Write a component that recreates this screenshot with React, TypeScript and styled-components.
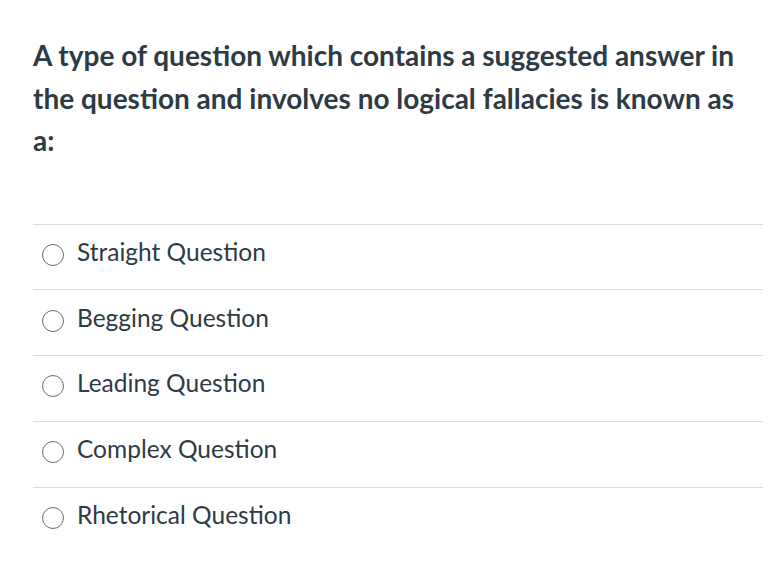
import styled, { createGlobalStyle } from 'styled-components';

const GlobalStyle = createGlobalStyle`
  body {
    margin: 0;
    background: #ffffff;
    font-family: Lato, "Liberation Sans", sans-serif;
    color: #2d3b45;
  }
`;

const Quiz = styled.div`
  width: 730px;
  padding: 34px 0 0 33px;
`;

const QuestionText = styled.p`
  max-width: 712px;
  margin: 0 0 62px;
  font-size: 28px;
  font-weight: 700;
  line-height: 42.5px;
`;

const Answers = styled.ul`
  list-style: none;
  margin: 0;
  padding: 0;
`;

const AnswerRow = styled.li`
  display: flex;
  align-items: center;
  gap: 13px;
  height: 65.75px;
  padding: 0 0 11px 9px;
  box-sizing: border-box;
  border-top: 1px solid #dcdcdc;
`;

const Radio = styled.span`
  width: 22px;
  height: 22px;
  box-sizing: border-box;
  border: 1.75px solid #6e6e6e;
  border-radius: 50%;
  flex-shrink: 0;
  margin-top: 7px;
`;

const AnswerLabel = styled.span`
  font-size: 24.5px;
  font-weight: 400;
`;

const options = [
  'Straight Question',
  'Begging Question',
  'Leading Question',
  'Complex Question',
  'Rhetorical Question',
];

export default function App() {
  return (
    <>
      <GlobalStyle />
      <Quiz>
        <QuestionText>
          A type of question which contains a suggested answer in the question and involves no
          logical fallacies is known as a:
        </QuestionText>
        <Answers>
          {options.map((o) => (
            <AnswerRow key={o}>
              <Radio />
              <AnswerLabel>{o}</AnswerLabel>
            </AnswerRow>
          ))}
        </Answers>
      </Quiz>
    </>
  );
}
